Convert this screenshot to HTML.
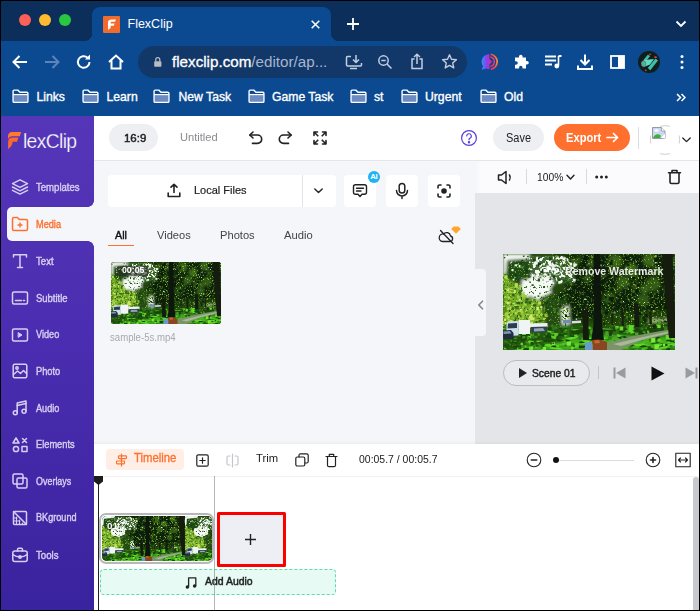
<!DOCTYPE html>
<html>
<head>
<meta charset="utf-8">
<title>FlexClip</title>
<style>
*{box-sizing:border-box;margin:0;padding:0}
html,body{width:700px;height:611px;overflow:hidden;background:#000}
body{font-family:"Liberation Sans",sans-serif;position:relative;color:#222}
.abs{position:absolute}
#win{position:absolute;left:0;top:0;width:700px;height:611px;background:#0b4a90;overflow:hidden}
#chrome{position:absolute;left:2px;top:2px;width:698px;height:113px}
#tabbar{position:absolute;left:-2px;top:-2px;width:700px;height:41px;background:#0b2e5a}
.tl{position:absolute;top:14px;width:12px;height:12px;border-radius:50%}
#tab{position:absolute;left:92px;top:7px;width:239px;height:34px;background:#0b4a90;border-radius:8px 8px 0 0}
#tab:before,#tab:after{content:"";position:absolute;bottom:0;width:8px;height:8px;background:radial-gradient(circle at 0 0,transparent 8px,#0b4a90 8.5px)}
#tab:before{left:-8px}
#tab:after{right:-8px;background:radial-gradient(circle at 100% 0,transparent 8px,#0b4a90 8.5px)}
.wt{color:#fff}
#url{position:absolute;left:136px;top:43.500px;width:328.500px;height:32px;border-radius:16px;background:#113868}
.bm{position:absolute;top:87px;height:16px;color:#fff;font-size:12.200px;line-height:16px;white-space:nowrap;-webkit-text-stroke:0.350px #fff}
#app{position:absolute;left:0;top:0;width:700px;height:611px}
.mi{font-size:10.500px;line-height:14px;font-weight:bold;letter-spacing:-0.300px}
.ic{position:absolute;left:9px;width:18px;height:18px}
.ic svg{width:18px;height:18px;display:block;fill:none;stroke:#d9d2f3;stroke-width:1.6;stroke-linecap:round;stroke-linejoin:round}
.t{position:absolute;white-space:nowrap}
</style>
</head>
<body>
<div id="win">
 <div id="chrome">
  <div id="tabbar">
    <div class="tl" style="left:19px;background:#fe5f57"></div>
    <div class="tl" style="left:39px;background:#febc2e"></div>
    <div class="tl" style="left:59px;background:#28c840"></div>
    <div id="tab">
      <div class="abs" style="left:11px;top:9px;width:17px;height:17px;background:#f26a2c;border-radius:1px">
        <svg width="17" height="17" viewBox="0 0 17 17"><path d="M5 14 L5 6.5 Q5 3.5 8.5 3.5 L13 3.5 L12 5.8 L9 5.8 Q7.6 5.8 7.6 7.2 L7.6 7.6 L11.6 7.6 L10.8 9.8 L7.6 9.8 L7.6 12 Z" fill="#fff"/></svg>
      </div>
      <div class="t wt" style="left:35.500px;top:9px;font-size:12.500px;line-height:16px">FlexClip</div>
      <svg class="abs" style="left:217.500px;top:12px" width="11" height="11" viewBox="0 0 11 11"><path d="M1.700 1.700 L9.300 9.300 M9.300 1.700 L1.700 9.300" stroke="#fff" stroke-width="1.500" fill="none"/></svg>
    </div>
    <svg class="abs" style="left:345.700px;top:17px" width="14" height="14" viewBox="0 0 14 14"><path d="M7 1 V13 M1 7 H13" stroke="#fff" stroke-width="1.8" fill="none"/></svg>
    <svg class="abs" style="left:675px;top:20px" width="12" height="8" viewBox="0 0 12 8"><path d="M1.5 1.5 L6 6 L10.5 1.5" stroke="#fff" stroke-width="1.8" fill="none"/></svg>
  </div>

  <!-- nav row -->
  <svg class="abs" style="left:9px;top:51px" width="18" height="18" viewBox="0 0 18 18"><path d="M16 9 H3 M8.5 3 L2.5 9 L8.5 15" stroke="#fff" stroke-width="2" fill="none"/></svg>
  <svg class="abs" style="left:41px;top:51px" width="18" height="18" viewBox="0 0 18 18"><path d="M2 9 H15 M9.5 3 L15.5 9 L9.5 15" stroke="#5c85bc" stroke-width="2" fill="none"/></svg>
  <svg class="abs" style="left:73px;top:51px" width="18" height="18" viewBox="0 0 18 18"><path d="M14.5 9 A5.8 5.8 0 1 1 12.6 4.7" stroke="#fff" stroke-width="2" fill="none"/><path d="M10 6.5 H15 V1.5 Z" fill="#fff"/></svg>
  <svg class="abs" style="left:105px;top:51px" width="18" height="18" viewBox="0 0 18 18"><path d="M2 9 L9 2.5 L16 9 M4.5 7.5 V15.5 H13.5 V7.5" stroke="#fff" stroke-width="2" fill="none"/></svg>
  <div id="url">
    <svg class="abs" style="left:15px;top:10.500px" width="9.600" height="12" viewBox="0 0 12 15"><path d="M3.5 7 V4.5 A2.5 2.5 0 0 1 8.5 4.5 V7" stroke="#b9bcc3" stroke-width="1.6" fill="none"/><rect x="1.5" y="6.5" width="9" height="7" rx="1" fill="#b9bcc3"/></svg>
    <div class="t" style="left:34px;top:6px;font-size:15.200px;line-height:20px;color:#fff;-webkit-text-stroke:0.300px #fff">flexclip.com<span style="color:#a7b5cf;-webkit-text-stroke:0">/editor/ap...</span></div>
    <!-- install -->
    <svg class="abs" style="left:207px;top:8px" width="18" height="16" viewBox="0 0 18 16"><path d="M6 2.5 H2.5 A1 1 0 0 0 1.5 3.5 V11 A1 1 0 0 0 2.5 12 H15.5 A1 1 0 0 0 16.500 11 V9" stroke="#c3cde0" stroke-width="1.5" fill="none"/><path d="M11 1 V8 M8 5.5 L11 8.5 L14 5.500 M5 14.500 H12" stroke="#c3cde0" stroke-width="1.5" fill="none"/></svg>
    <svg class="abs" style="left:239px;top:8px" width="16" height="16" viewBox="0 0 16 16"><circle cx="6.500" cy="6.500" r="4.700" stroke="#c3cde0" stroke-width="1.500" fill="none"/><path d="M10 10 L14.500 14.500 M4.300 6.500 H8.700" stroke="#c3cde0" stroke-width="1.500" fill="none"/></svg>
    <svg class="abs" style="left:272px;top:7px" width="14" height="17" viewBox="0 0 14 17"><path d="M4.500 6 H2 V15.500 H12 V6 H9.500 M7 11 V1.500 M4 4 L7 1.200 L10 4" stroke="#c3cde0" stroke-width="1.500" fill="none"/></svg>
    <svg class="abs" style="left:303px;top:7px" width="17" height="17" viewBox="0 0 17 17"><path d="M8.500 1.800 L10.500 6.300 L15.400 6.800 L11.700 10.100 L12.800 14.900 L8.500 12.400 L4.200 14.900 L5.300 10.100 L1.600 6.800 L6.500 6.300 Z" stroke="#c3cde0" stroke-width="1.400" fill="none" stroke-linejoin="round"/></svg>
  </div>
  <!-- extension icons -->
  <div class="abs" style="left:478px;top:51px;width:18px;height:18px">
    <svg width="18" height="18" viewBox="0 0 18 18"><defs><linearGradient id="eg1" x1="0" y1="0" x2="1" y2="0"><stop offset="0" stop-color="#3390ff"/><stop offset="0.500" stop-color="#8a40e6"/><stop offset="1" stop-color="#ff1f8e"/></linearGradient><linearGradient id="eg2" x1="0" y1="0" x2="0" y2="1"><stop offset="0" stop-color="#ff4a4a"/><stop offset="0.450" stop-color="#ffa02a"/><stop offset="1" stop-color="#ff2d5f"/></linearGradient></defs><path d="M9.400 1.200 A7.600 7.600 0 0 0 3.100 13.300 L1.700 16.800 L6 15.500 A7.600 7.600 0 0 0 9.400 16.300 L9.400 11.600 L12 8.800 L9.400 6 Z" fill="url(#eg1)"/><path d="M10.400 4 A4.900 4.900 0 0 1 10.400 13.600" stroke="#ff2d6a" stroke-width="1.500" fill="none"/><path d="M10.800 1.300 A7.600 7.600 0 0 1 10.800 16.300" stroke="url(#eg2)" stroke-width="1.600" fill="none"/></svg>
  </div>
  <svg class="abs" style="left:510px;top:51px" width="18" height="18" viewBox="0 0 18 18"><path d="M7 3.500 A1.800 1.800 0 0 1 10.600 3.500 V4.500 H14 V8 H15 A1.800 1.800 0 0 1 15 11.600 H14 V15.500 H10.500 V14.500 A1.700 1.700 0 0 0 7.100 14.500 V15.500 H3 V11.800 H4 A1.800 1.800 0 0 0 4 8.200 H3 V4.500 H7 Z" fill="#fff"/></svg>
  <svg class="abs" style="left:542px;top:52px" width="18" height="16" viewBox="0 0 18 16"><path d="M1 2.500 H12 M1 6.500 H12 M1 10.500 H8" stroke="#fff" stroke-width="1.800" fill="none"/><path d="M14.500 2 V11.500" stroke="#fff" stroke-width="1.600"/><path d="M14.500 2 H17.500" stroke="#fff" stroke-width="2"/><circle cx="12.800" cy="12" r="2.400" fill="#fff"/></svg>
  <svg class="abs" style="left:574px;top:51px" width="18" height="18" viewBox="0 0 18 18"><path d="M9 1.500 V11 M4.500 7 L9 11.500 L13.500 7" stroke="#fff" stroke-width="2" fill="none"/><path d="M2 12.500 V16 H16 V12.500" stroke="#fff" stroke-width="2" fill="none"/></svg>
  <svg class="abs" style="left:608px;top:53px" width="15" height="14" viewBox="0 0 15 14"><rect x="1" y="1" width="13" height="12" stroke="#fff" stroke-width="1.800" fill="none"/><rect x="8" y="1" width="6" height="12" fill="#fff"/></svg>
  <div class="abs" style="left:636px;top:49.200px;width:22px;height:22px;border-radius:50%;background:#0e1f1c;overflow:hidden">
    <svg width="22" height="22" viewBox="0 0 22 22"><path d="M5.500 9 L10 3.500 L12 5.200 L7.500 10.800 Z" fill="#3fbfa8"/><path d="M9.800 17 L17.500 7.500 L20 9.500 L12.300 19.200 Z" fill="#3fbfa8"/><path d="M3 12 L6 9 L16 8 L12 13.500 L6 16 Z" fill="#62d8c2"/><ellipse cx="5.500" cy="12.800" rx="2.200" ry="3" fill="#35c0a5" stroke="#a03848" stroke-width="0.500"/><circle cx="12" cy="3.300" r="0.900" fill="#e8304a"/><ellipse cx="17.500" cy="6.200" rx="1.500" ry="0.900" fill="#e8304a"/><circle cx="7.800" cy="19.300" r="0.900" fill="#e8304a"/></svg>
  </div>
  <svg class="abs" style="left:678px;top:52px" width="4" height="16" viewBox="0 0 4 16"><circle cx="2" cy="2.500" r="1.500" fill="#fff"/><circle cx="2" cy="8" r="1.500" fill="#fff"/><circle cx="2" cy="13.500" r="1.500" fill="#fff"/></svg>

  <!-- bookmarks -->
  <svg class="abs" style="left:9.5px;top:87px" width="17" height="14.500" viewBox="0 0 16 13" preserveAspectRatio="none"><rect x="1.300" y="5" width="13.400" height="6.700" fill="#6c8bc3"/><path d="M1 2 Q1 1 2 1 H5.500 L7.500 3 H14 Q15 3 15 4 V11 Q15 12 14 12 H2 Q1 12 1 11 Z" fill="none" stroke="#fff" stroke-width="1.300" stroke-linejoin="round"/><path d="M1 5 H15" stroke="#fff" stroke-width="1.100"/></svg>
  <div class="bm" style="left:34.5px">Links</div>
  <svg class="abs" style="left:79.5px;top:87px" width="17" height="14.500" viewBox="0 0 16 13" preserveAspectRatio="none"><rect x="1.300" y="5" width="13.400" height="6.700" fill="#6c8bc3"/><path d="M1 2 Q1 1 2 1 H5.500 L7.500 3 H14 Q15 3 15 4 V11 Q15 12 14 12 H2 Q1 12 1 11 Z" fill="none" stroke="#fff" stroke-width="1.300" stroke-linejoin="round"/><path d="M1 5 H15" stroke="#fff" stroke-width="1.100"/></svg>
  <div class="bm" style="left:104.5px">Learn</div>
  <svg class="abs" style="left:151px;top:87px" width="17" height="14.500" viewBox="0 0 16 13" preserveAspectRatio="none"><rect x="1.300" y="5" width="13.400" height="6.700" fill="#6c8bc3"/><path d="M1 2 Q1 1 2 1 H5.500 L7.500 3 H14 Q15 3 15 4 V11 Q15 12 14 12 H2 Q1 12 1 11 Z" fill="none" stroke="#fff" stroke-width="1.300" stroke-linejoin="round"/><path d="M1 5 H15" stroke="#fff" stroke-width="1.100"/></svg>
  <div class="bm" style="left:176.5px">New Task</div>
  <svg class="abs" style="left:245.5px;top:87px" width="17" height="14.500" viewBox="0 0 16 13" preserveAspectRatio="none"><rect x="1.300" y="5" width="13.400" height="6.700" fill="#6c8bc3"/><path d="M1 2 Q1 1 2 1 H5.500 L7.500 3 H14 Q15 3 15 4 V11 Q15 12 14 12 H2 Q1 12 1 11 Z" fill="none" stroke="#fff" stroke-width="1.300" stroke-linejoin="round"/><path d="M1 5 H15" stroke="#fff" stroke-width="1.100"/></svg>
  <div class="bm" style="left:270px">Game Task</div>
  <svg class="abs" style="left:347.5px;top:87px" width="17" height="14.500" viewBox="0 0 16 13" preserveAspectRatio="none"><rect x="1.300" y="5" width="13.400" height="6.700" fill="#6c8bc3"/><path d="M1 2 Q1 1 2 1 H5.500 L7.500 3 H14 Q15 3 15 4 V11 Q15 12 14 12 H2 Q1 12 1 11 Z" fill="none" stroke="#fff" stroke-width="1.300" stroke-linejoin="round"/><path d="M1 5 H15" stroke="#fff" stroke-width="1.100"/></svg>
  <div class="bm" style="left:372px">st</div>
  <svg class="abs" style="left:399px;top:87px" width="17" height="14.500" viewBox="0 0 16 13" preserveAspectRatio="none"><rect x="1.300" y="5" width="13.400" height="6.700" fill="#6c8bc3"/><path d="M1 2 Q1 1 2 1 H5.500 L7.500 3 H14 Q15 3 15 4 V11 Q15 12 14 12 H2 Q1 12 1 11 Z" fill="none" stroke="#fff" stroke-width="1.300" stroke-linejoin="round"/><path d="M1 5 H15" stroke="#fff" stroke-width="1.100"/></svg>
  <div class="bm" style="left:423px">Urgent</div>
  <svg class="abs" style="left:477.5px;top:87px" width="17" height="14.500" viewBox="0 0 16 13" preserveAspectRatio="none"><rect x="1.300" y="5" width="13.400" height="6.700" fill="#6c8bc3"/><path d="M1 2 Q1 1 2 1 H5.500 L7.500 3 H14 Q15 3 15 4 V11 Q15 12 14 12 H2 Q1 12 1 11 Z" fill="none" stroke="#fff" stroke-width="1.300" stroke-linejoin="round"/><path d="M1 5 H15" stroke="#fff" stroke-width="1.100"/></svg>
  <div class="bm" style="left:502px">Old</div>
  <svg class="abs" style="left:674px;top:91px" width="10" height="9" viewBox="0 0 10 9"><path d="M1 1 L4.500 4.500 L1 8 M5.500 1 L9 4.500 L5.500 8" stroke="#fff" stroke-width="1.500" fill="none"/></svg>

 </div>
  <div id="app">
<!--APPSTART-->
<svg width="0" height="0" style="position:absolute">
<defs>
<filter id="n1" x="0" y="0" width="100%" height="100%" filterUnits="objectBoundingBox" color-interpolation-filters="sRGB"><feTurbulence type="fractalNoise" baseFrequency="0.5" numOctaves="2" seed="3" result="n"/><feColorMatrix in="n" type="matrix" values="0 0 0 0 0.204 0 0 0 0 0.361 0 0 0 0 0.086 10 0 0 0 -5.5" result="s"/><feComposite in="s" in2="SourceGraphic" operator="in"/></filter>
<filter id="n2" x="0" y="0" width="100%" height="100%" filterUnits="objectBoundingBox" color-interpolation-filters="sRGB"><feTurbulence type="fractalNoise" baseFrequency="0.6" numOctaves="2" seed="8" result="n"/><feColorMatrix in="n" type="matrix" values="0 0 0 0 0.525 0 0 0 0 0.690 0 0 0 0 0.157 12 0 0 0 -7.7" result="s"/><feComposite in="s" in2="SourceGraphic" operator="in"/></filter>
<filter id="n3" x="0" y="0" width="100%" height="100%" filterUnits="objectBoundingBox" color-interpolation-filters="sRGB"><feTurbulence type="fractalNoise" baseFrequency="0.7" numOctaves="2" seed="12" result="n"/><feColorMatrix in="n" type="matrix" values="0 0 0 0 0.925 0 0 0 0 0.965 0 0 0 0 0.925 14 0 0 0 -10.6" result="s"/><feComposite in="s" in2="SourceGraphic" operator="in"/></filter>
<filter id="n4" x="0" y="0" width="100%" height="100%" filterUnits="objectBoundingBox" color-interpolation-filters="sRGB"><feTurbulence type="fractalNoise" baseFrequency="0.45" numOctaves="2" seed="5" result="n"/><feColorMatrix in="n" type="matrix" values="0 0 0 0 0.659 0 0 0 0 0.831 0 0 0 0 0.251 10 0 0 0 -5.6" result="s"/><feComposite in="s" in2="SourceGraphic" operator="in"/></filter>
<filter id="n5" x="0" y="0" width="100%" height="100%" filterUnits="objectBoundingBox" color-interpolation-filters="sRGB"><feTurbulence type="fractalNoise" baseFrequency="0.5" numOctaves="2" seed="21" result="n"/><feColorMatrix in="n" type="matrix" values="0 0 0 0 0.173 0 0 0 0 0.376 0 0 0 0 0.078 10 0 0 0 -5.9" result="s"/><feComposite in="s" in2="SourceGraphic" operator="in"/></filter>
<filter id="n6" x="0" y="0" width="100%" height="100%" filterUnits="objectBoundingBox" color-interpolation-filters="sRGB"><feTurbulence type="fractalNoise" baseFrequency="0.09 0.3" numOctaves="1" seed="4" result="n"/><feColorMatrix in="n" type="matrix" values="0 0 0 0 0.376 0 0 0 0 0.847 0 0 0 0 0.157 9 0 0 0 -4.9" result="s"/><feComposite in="s" in2="SourceGraphic" operator="in"/></filter>
<filter id="n7" x="0" y="0" width="100%" height="100%" filterUnits="objectBoundingBox" color-interpolation-filters="sRGB"><feTurbulence type="fractalNoise" baseFrequency="0.12 0.35" numOctaves="1" seed="14" result="n"/><feColorMatrix in="n" type="matrix" values="0 0 0 0 0.078 0 0 0 0 0.275 0 0 0 0 0.047 9 0 0 0 -4.9" result="s"/><feComposite in="s" in2="SourceGraphic" operator="in"/></filter>
<filter id="n8" x="0" y="0" width="100%" height="100%" filterUnits="objectBoundingBox" color-interpolation-filters="sRGB"><feTurbulence type="fractalNoise" baseFrequency="0.3" numOctaves="2" seed="31" result="n"/><feColorMatrix in="n" type="matrix" values="0 0 0 0 0.957 0 0 0 0 0.976 0 0 0 0 0.949 10 0 0 0 -4.9" result="s"/><feComposite in="s" in2="SourceGraphic" operator="in"/></filter>
<filter id="n9" x="0" y="0" width="100%" height="100%" filterUnits="objectBoundingBox" color-interpolation-filters="sRGB"><feTurbulence type="fractalNoise" baseFrequency="0.4" numOctaves="2" seed="17" result="n"/><feColorMatrix in="n" type="matrix" values="0 0 0 0 0.141 0 0 0 0 0.314 0 0 0 0 0.094 12 0 0 0 -7.6" result="s"/><feComposite in="s" in2="SourceGraphic" operator="in"/></filter>
<filter id="b2" x="-10%" y="-10%" width="120%" height="120%"><feGaussianBlur stdDeviation="1.600"/></filter>
<filter id="b1" x="-5%" y="-5%" width="110%" height="110%"><feGaussianBlur stdDeviation="0.550"/></filter>
<g id="forest">
<rect width="172" height="96" fill="#245214"/>
<g filter="url(#b2)"><path d="M0 0 L172 0 L172 96 L0 96Z" fill="#24460f"/><path d="M48 0 L172 0 L172 64 L60 66 L52 48 L62 30 L62 14Z" fill="#0f210a"/><path d="M26 3 L60 2 L74 10 L70 28 L50 30 L30 24 L26 14Z" fill="#3f6a30"/><path d="M0 18 L6 26 L18 32 L24 44 L40 46 L44 60 L42 70 L0 72Z" fill="#6ea827"/><path d="M0 0 L27 0 L25 5 L10 6 L5 9 L4 18 L0 22Z" fill="#f4f8f4"/><path d="M19 26 L26 21 L34 23 L45 21 L51 29 L47 35 L50 41 L40 43 L36 46 L27 42 L22 44 L18 35Z" fill="#f6faf4"/><path d="M4 6 L24 5 L28 14 L26 25 L12 27 L3 20Z" fill="#1f4a16"/><path d="M37 44 L50 38 L64 42 L66 72 L44 74 L40 60Z" fill="#234a12"/><path d="M100 58 L172 56 L172 74 L100 74Z" fill="#1f4010"/><path d="M0 74 L172 70 L172 96 L0 96Z" fill="#2f8214"/><path d="M66 74 L172 70 L172 80 L120 86 L66 84Z" fill="#1c430d"/><path d="M24 92 L60 86 L100 80 L172 84 L172 96 L10 96Z" fill="#44b01c"/><path d="M0 80 L44 77 L58 74 L60 88 L24 92 L0 96Z" fill="#22520f"/><path d="M58 54 L66 52 L67 70 L59 71Z" fill="#e4f0e4"/><path d="M146 65.5 L166 65 L166 68 L146 68.5Z" fill="#b4cc90"/><circle cx="88.9" cy="9.4" r="3.6" fill="#2f5818"/><circle cx="148.6" cy="5.8" r="3.5" fill="#10260a"/><circle cx="75.8" cy="5.3" r="3.0" fill="#274c14"/><circle cx="149.2" cy="7.7" r="2.6" fill="#10260a"/><circle cx="163.7" cy="35.8" r="3.0" fill="#274c14"/><circle cx="55.6" cy="53.2" r="2.7" fill="#274c14"/><circle cx="114.9" cy="35.4" r="3.4" fill="#274c14"/><circle cx="62.4" cy="35.4" r="2.5" fill="#2f5818"/><circle cx="115.7" cy="3.9" r="2.1" fill="#274c14"/><circle cx="109.6" cy="33.0" r="3.9" fill="#0f2208"/><circle cx="120.3" cy="28.1" r="2.7" fill="#274c14"/><circle cx="133.9" cy="15.1" r="3.4" fill="#10260a"/><circle cx="109.4" cy="21.3" r="3.1" fill="#10260a"/><circle cx="167.6" cy="7.3" r="3.0" fill="#38641a"/><circle cx="68.2" cy="30.3" r="2.1" fill="#2f5818"/><circle cx="141.7" cy="35.5" r="4.2" fill="#38641a"/><circle cx="90.8" cy="21.7" r="3.2" fill="#0f2208"/><circle cx="58.3" cy="5.8" r="2.7" fill="#2f5818"/><circle cx="57.3" cy="43.5" r="3.6" fill="#0f2208"/><circle cx="84.2" cy="23.9" r="3.7" fill="#2f5818"/><circle cx="162.9" cy="22.0" r="3.5" fill="#0f2208"/><circle cx="57.1" cy="47.6" r="2.3" fill="#274c14"/><circle cx="97.7" cy="56.8" r="3.2" fill="#274c14"/><circle cx="103.9" cy="34.1" r="4.2" fill="#0f2208"/><circle cx="153.7" cy="17.3" r="3.0" fill="#38641a"/><circle cx="131.9" cy="23.6" r="2.6" fill="#2f5818"/><circle cx="71.1" cy="14.4" r="2.6" fill="#0f2208"/><circle cx="149.7" cy="11.3" r="2.7" fill="#274c14"/><circle cx="100.3" cy="22.9" r="3.4" fill="#274c14"/><circle cx="132.9" cy="32.0" r="3.5" fill="#2f5818"/><circle cx="104.8" cy="54.0" r="4.4" fill="#10260a"/><circle cx="97.1" cy="24.7" r="2.3" fill="#0f2208"/><circle cx="57.5" cy="4.2" r="2.5" fill="#274c14"/><circle cx="63.2" cy="37.2" r="2.3" fill="#10260a"/><circle cx="112" cy="8" r="7" fill="#3a661a"/><circle cx="128" cy="16" r="6" fill="#42721e"/><circle cx="146" cy="6" r="6" fill="#3a661a"/><circle cx="120" cy="28" r="6" fill="#35601a"/><circle cx="70" cy="10" r="5" fill="#35601a"/><circle cx="150" cy="30" r="7" fill="#325a18"/><circle cx="106" cy="44" r="6" fill="#2c5416"/><circle cx="140" cy="46" r="6" fill="#2f5818"/></g>
<path d="M48 0 L172 0 L172 64 L60 66 L52 48 L62 30 L62 14Z" fill="#000" filter="url(#n1)"/><path d="M48 0 L172 0 L172 64 L60 66 L52 48 L62 30 L62 14Z" fill="#000" filter="url(#n2)"/><path d="M48 0 L172 0 L172 64 L60 66 L52 48 L62 30 L62 14Z" fill="#000" filter="url(#n3)"/>
<path d="M37 44 L50 38 L64 42 L66 72 L44 74 L40 60Z" fill="#000" filter="url(#n1)"/><path d="M37 44 L50 38 L64 42 L66 72 L44 74 L40 60Z" fill="#000" filter="url(#n2)"/>
<path d="M100 58 L172 56 L172 74 L100 74Z" fill="#000" filter="url(#n1)"/><path d="M100 58 L172 56 L172 74 L100 74Z" fill="#000" filter="url(#n2)"/>
<path d="M0 18 L6 26 L18 32 L24 44 L40 46 L44 60 L42 70 L0 72Z" fill="#000" filter="url(#n4)"/><path d="M0 18 L6 26 L18 32 L24 44 L40 46 L44 60 L42 70 L0 72Z" fill="#000" filter="url(#n5)"/>
<path d="M0 74 L172 70 L172 96 L0 96Z" fill="#000" filter="url(#n6)"/><path d="M0 74 L172 70 L172 96 L0 96Z" fill="#000" filter="url(#n7)"/>
<path d="M0 80 L44 77 L58 74 L60 88 L24 92 L0 96Z" fill="#000" filter="url(#n5)"/>
<path d="M26 3 L60 2 L74 10 L70 28 L50 30 L30 24 L26 14Z" fill="#000" filter="url(#n8)"/><path d="M19 26 L26 21 L34 23 L45 21 L51 29 L47 35 L50 41 L40 43 L36 46 L27 42 L22 44 L18 35Z" fill="#000" filter="url(#n9)"/><path d="M4 6 L24 5 L28 14 L26 25 L12 27 L3 20Z" fill="#000" filter="url(#n2)"/>
<g filter="url(#b1)">
<path fill="#0a1a06" d="M66.8 6.7h2.4v1.7h-2.4zM66.2 35.8h1.6v1.6h-1.6zM134.3 17.2h2.4v1.9h-2.4zM114.0 51.4h2.3v1.9h-2.3zM166.4 24.1h2.1v1.7h-2.1zM89.9 31.9h4.0v4.2h-4.0zM107.5 43.1h3.5v2.6h-3.5zM160.8 51.6h3.4v3.3h-3.4zM105.4 49.1h1.7v1.4h-1.7zM129.5 23.1h2.9v2.2h-2.9zM147.1 47.9h1.8v2.0h-1.8zM150.6 58.0h1.8v1.4h-1.8zM156.2 51.2h3.0v3.5h-3.0zM132.6 35.0h2.7v3.2h-2.7zM78.8 18.3h3.4v3.4h-3.4zM142.2 60.2h2.6v2.8h-2.6zM133.9 29.9h2.8v2.8h-2.8zM134.7 57.9h3.9v3.3h-3.9zM152.2 9.1h1.8v1.7h-1.8zM131.2 28.3h2.0v1.8h-2.0zM159.2 10.2h3.3v3.6h-3.3zM79.4 9.1h2.7v3.1h-2.7zM97.4 32.2h4.0v4.8h-4.0zM102.6 1.2h2.3v2.5h-2.3zM62.0 60.6h2.1v2.5h-2.1zM80.9 2.6h3.4v3.0h-3.4z"/>
<path fill="#0c1e08" d="M124.1 9.8h2.1v1.9h-2.1zM106.8 7.6h2.7v3.5h-2.7zM108.0 5.7h1.8v1.6h-1.8zM107.3 45.7h2.8v2.3h-2.8zM148.0 54.0h3.3v2.8h-3.3zM92.1 1.9h1.6v1.4h-1.6zM72.0 39.9h2.4v2.8h-2.4zM101.8 42.0h1.7v2.2h-1.7zM105.7 43.3h3.0v3.2h-3.0zM101.8 57.5h3.6v2.9h-3.6zM74.4 33.1h3.4v3.1h-3.4zM151.4 4.0h3.3v4.1h-3.3zM69.4 31.3h3.3v3.4h-3.3zM98.1 27.8h2.4v1.8h-2.4z"/>
<path fill="#8ab436" d="M149.7 56.1h1.9v2.5h-1.9zM163.6 41.5h1.7v1.4h-1.7zM106.9 61.7h1.1v1.4h-1.1zM90.5 54.9h2.0v2.2h-2.0zM151.8 0.9h1.9v2.3h-1.9zM59.3 53.9h1.2v1.3h-1.2z"/>
<path fill="#4f7a1c" d="M66.5 60.7h1.8v2.0h-1.8zM106.9 33.2h1.3v1.3h-1.3zM170.1 9.9h2.0v2.2h-2.0zM148.7 9.2h1.7v1.7h-1.7zM127.7 5.6h1.1v1.1h-1.1z"/>
<path fill="#3f6a18" d="M82.6 52.8h1.3v1.6h-1.3zM110.0 11.7h1.5v1.1h-1.5zM129.4 36.0h2.2v2.9h-2.2z"/>
<path fill="#6a9626" d="M164.4 41.9h2.1v1.6h-2.1zM77.6 7.2h1.2v0.9h-1.2zM168.4 39.5h2.0v1.4h-2.0zM88.1 2.3h2.2v1.9h-2.2z"/>
<path fill="#5a8820" d="M56.3 56.9h1.6v1.5h-1.6zM52.6 1.2h1.7v2.2h-1.7zM67.5 29.4h1.4v1.7h-1.4zM94.7 29.8h1.1v0.8h-1.1z"/>
<path fill="#355e16" d="M99.8 60.4h1.9v1.4h-1.9zM68.2 5.6h2.2v2.7h-2.2zM76.9 38.6h1.7v2.0h-1.7zM158.7 51.7h1.8v2.1h-1.8zM150.3 47.2h1.7v1.6h-1.7zM150.5 38.5h2.2v2.5h-2.2zM132.4 32.3h1.0v1.2h-1.0zM163.6 59.3h1.1v1.1h-1.1z"/>
<path fill="#a8d8e8" d="M139.4 16.6h0.9v0.7h-0.9zM57.5 60.1h1.0v0.7h-1.0zM127.7 5.1h0.9v0.8h-0.9zM135.9 18.8h1.2v1.4h-1.2zM65.6 34.6h1.6v1.2h-1.6zM152.0 7.9h1.5v1.7h-1.5zM83.9 24.6h1.1v1.4h-1.1zM141.7 56.4h1.0v0.7h-1.0z"/>
<path fill="#e8f4f0" d="M141.8 15.2h1.3v1.3h-1.3zM133.9 41.0h0.9v0.9h-0.9zM81.3 44.4h1.4v1.5h-1.4zM72.7 64.6h1.5v1.1h-1.5zM111.1 58.5h1.4v1.1h-1.4zM96.9 10.5h1.6v1.7h-1.6zM85.4 9.3h1.1v1.0h-1.1z"/>
<path fill="#cfe8c0" d="M96.0 60.5h1.5v1.2h-1.5z"/>
<path fill="#3b7422" d="M26.2 27.6h1.8v1.4h-1.8zM43.9 31.7h1.0v1.2h-1.0zM36.1 39.0h1.1v1.2h-1.1zM42.4 37.3h1.6v1.4h-1.6zM34.5 41.3h1.8v1.8h-1.8z"/>
<path fill="#5a9a30" d="M38.3 24.5h2.3v2.3h-2.3zM22.2 32.8h1.5v1.3h-1.5z"/>
<path fill="#2a5a1a" d="M36.4 30.9h1.3v1.0h-1.3zM22.6 25.8h1.1v1.0h-1.1zM28.5 30.2h2.2v1.8h-2.2zM24.1 1.9h1.5v1.2h-1.5zM22.7 4.5h1.2v1.4h-1.2zM0.8 3.0h1.6v1.2h-1.6zM19.9 1.4h1.6v1.5h-1.6z"/>
<path fill="#1c4412" d="M62.0 13.6h1.9v1.9h-1.9zM69.0 15.3h2.3v1.6h-2.3zM49.7 21.5h2.6v2.4h-2.6zM49.8 7.6h2.7v2.2h-2.7zM36.6 23.3h1.6v2.1h-1.6zM47.2 5.1h1.2v0.9h-1.2zM37.2 15.3h3.1v4.0h-3.1zM63.9 27.6h2.8v2.2h-2.8zM30.0 4.7h2.1v2.4h-2.1zM56.7 4.6h1.4v1.5h-1.4zM46.1 3.4h2.6v3.2h-2.6zM46.3 25.0h1.9v2.3h-1.9z"/>
<path fill="#e4f0e0" d="M39.0 23.1h2.1v2.2h-2.1zM60.1 7.2h2.0v2.2h-2.0zM48.4 10.7h2.6v3.1h-2.6zM59.9 7.5h2.2v2.1h-2.2zM70.2 9.2h2.6v3.3h-2.6zM40.1 9.8h1.6v1.4h-1.6zM57.9 2.2h2.4v2.7h-2.4zM36.4 12.3h1.3v1.1h-1.3zM69.9 24.8h2.8v2.6h-2.8z"/>
<path fill="#ffffff" d="M32.0 16.1h2.4v2.9h-2.4zM51.3 15.1h2.0v2.3h-2.0zM40.5 14.9h3.1v3.4h-3.1zM46.2 9.2h2.5v3.1h-2.5zM35.5 24.3h2.6v2.6h-2.6zM63.5 4.2h1.4v1.7h-1.4zM45.6 20.2h2.1v2.1h-2.1zM34.3 5.7h2.0v2.5h-2.0zM37.1 14.6h1.8v2.2h-1.8zM49.2 13.4h2.8v3.0h-2.8zM46.0 26.2h3.2v2.9h-3.2zM44.8 13.3h3.1v3.0h-3.1z"/>
<path fill="#24501a" d="M44.5 20.1h2.0v1.7h-2.0zM59.6 25.7h3.0v2.2h-3.0zM43.5 27.1h1.1v1.0h-1.1zM56.0 13.3h1.8v1.8h-1.8zM60.4 10.9h1.6v1.1h-1.6zM54.6 24.6h3.1v2.3h-3.1zM34.8 24.5h2.6v3.1h-2.6zM33.3 8.6h2.9v2.8h-2.9zM61.9 25.7h2.5v1.9h-2.5zM43.9 26.3h2.0v1.7h-2.0zM63.1 5.6h1.1v0.9h-1.1z"/>
<path fill="#f4f8f2" d="M33.4 16.6h2.5v3.2h-2.5zM57.0 10.5h1.3v1.1h-1.3zM48.8 8.6h1.5v2.0h-1.5zM57.2 3.5h1.4v1.8h-1.4zM55.3 27.1h2.1v2.6h-2.1zM44.9 8.0h3.1v2.5h-3.1zM70.7 11.2h1.4v1.8h-1.4zM43.1 25.0h2.8v2.7h-2.8zM43.4 11.4h3.1v2.2h-3.1zM37.1 24.6h2.4v3.2h-2.4zM31.7 7.3h3.1v3.3h-3.1z"/>
<path fill="#143410" d="M47.0 23.4h1.2v1.1h-1.2zM35.2 9.3h2.7v1.9h-2.7zM35.6 8.9h1.5v1.2h-1.5zM35.0 3.8h1.6v1.3h-1.6zM34.9 10.7h1.4v1.7h-1.4zM55.9 66.2h1.1v0.8h-1.1zM43.0 47.5h2.0v1.8h-2.0zM63.0 44.1h2.6v2.0h-2.6zM55.5 51.0h2.7v2.8h-2.7zM44.7 73.7h2.2v2.0h-2.2zM49.1 51.1h1.1v1.1h-1.1zM60.6 44.3h1.6v1.4h-1.6z"/>
<path fill="#1a4210" d="M55.0 51.4h2.0v1.6h-2.0zM45.7 68.1h1.1v1.4h-1.1zM61.3 42.2h2.2v2.3h-2.2zM55.8 49.1h1.5v1.4h-1.5zM60.5 52.4h1.1v1.0h-1.1zM38.9 50.6h2.5v2.0h-2.5zM42.8 52.5h2.3v2.0h-2.3zM44.3 57.3h2.7v3.1h-2.7zM49.8 44.4h2.5v1.8h-2.5zM46.0 72.8h2.7v3.4h-2.7zM47.3 41.8h1.7v1.4h-1.7zM57.5 54.2h1.1v0.9h-1.1zM48.7 47.5h1.0v1.1h-1.0zM44.6 61.2h1.2v1.5h-1.2zM57.6 47.6h2.1v2.0h-2.1z"/>
<path fill="#3b7a20" d="M41.7 44.2h1.1v1.1h-1.1zM48.2 70.6h2.2v2.7h-2.2zM55.6 68.8h2.2v2.4h-2.2zM61.0 44.6h1.4v1.3h-1.4zM48.1 42.4h1.5v1.7h-1.5zM50.5 54.1h2.2v2.7h-2.2zM39.7 53.9h2.0v1.5h-2.0zM51.3 72.4h2.8v2.3h-2.8zM54.1 45.4h2.2v2.2h-2.2zM42.4 43.7h2.8v2.2h-2.8z"/>
<path fill="#4f962a" d="M50.0 53.8h1.0v1.1h-1.0zM59.6 56.4h1.1v1.1h-1.1zM63.2 54.4h1.5v1.9h-1.5zM58.3 64.9h1.4v1.3h-1.4zM54.2 58.8h2.2v2.2h-2.2zM44.2 70.5h1.1v1.1h-1.1zM41.1 45.2h2.2v2.2h-2.2zM50.9 57.4h1.8v1.7h-1.8z"/>
<path fill="#4b8a2a" d="M3.9 0.6h1.1v1.4h-1.1z"/>
<path fill="#163a10" d="M25.0 21.6h2.1v1.9h-2.1zM5.2 21.5h1.9v1.9h-1.9zM18.5 5.7h1.6v1.6h-1.6zM11.7 20.5h1.8v1.5h-1.8zM26.9 16.3h1.9v1.5h-1.9zM22.2 15.8h2.5v2.6h-2.5zM17.5 7.8h1.7v2.1h-1.7z"/>
<path fill="#e8f4e8" d="M8.1 7.5h1.1v1.3h-1.1zM18.7 12.8h1.6v1.5h-1.6zM9.6 24.8h1.8v1.6h-1.8zM8.8 15.1h1.8v2.1h-1.8zM15.7 10.9h2.1v2.5h-2.1zM6.9 8.4h1.4v1.2h-1.4zM11.7 10.2h2.4v2.1h-2.4z"/>
<path fill="#2f6a1c" d="M5.4 21.7h1.3v1.2h-1.3zM9.5 12.7h2.4v1.7h-2.4zM25.8 21.9h1.9v1.9h-1.9zM17.4 11.3h1.7v1.7h-1.7zM15.3 22.5h1.3v1.3h-1.3zM19.2 12.7h1.5v1.2h-1.5zM19.6 21.3h1.3v1.2h-1.3zM19.4 9.3h1.2v1.0h-1.2z"/>
<path fill="#3f7418" d="M8.6 52.5h1.4v1.2h-1.4zM8.1 53.3h2.9v2.7h-2.9zM23.7 64.6h1.2v1.5h-1.2zM30.6 44.9h1.9v1.8h-1.9zM21.9 46.2h3.0v3.5h-3.0zM25.3 67.6h2.2v1.5h-2.2zM34.3 64.3h1.7v2.2h-1.7zM1.2 19.9h2.0v2.3h-2.0zM41.7 67.1h1.3v1.4h-1.3zM28.2 69.6h2.7v2.5h-2.7zM16.4 39.1h2.0v1.9h-2.0zM16.4 58.5h2.9v3.7h-2.9zM16.1 35.9h2.8v2.3h-2.8zM11.9 63.3h1.9v1.6h-1.9zM2.5 66.3h2.7v2.2h-2.7zM36.6 46.4h1.6v1.5h-1.6zM12.4 52.5h3.3v2.5h-3.3zM36.8 52.4h2.2v1.9h-2.2zM40.7 51.5h1.8v1.8h-1.8z"/>
<path fill="#94c034" d="M9.8 71.0h1.9v1.3h-1.9zM18.5 60.2h2.8v3.0h-2.8zM17.3 59.2h1.5v1.9h-1.5zM20.6 48.4h1.7v2.2h-1.7zM29.3 62.9h2.9v2.8h-2.9zM35.4 61.1h2.0v2.2h-2.0zM21.1 41.1h2.6v2.9h-2.6zM25.6 53.5h1.7v1.2h-1.7zM19.1 40.8h2.4v2.9h-2.4zM22.3 70.6h2.6v3.1h-2.6zM31.8 65.8h2.4v1.8h-2.4zM1.6 59.8h3.2v3.5h-3.2zM32.9 55.5h1.5v1.8h-1.5zM27.7 56.3h2.2v2.8h-2.2zM19.3 54.6h1.5v1.8h-1.5zM27.8 60.5h1.5v1.6h-1.5zM41.6 59.4h3.0v3.8h-3.0zM10.3 56.9h1.6v2.0h-1.6zM2.6 47.9h1.3v1.6h-1.3zM13.1 49.9h2.9v2.2h-2.9zM12.7 66.4h1.3v1.5h-1.3zM18.0 57.0h1.3v1.6h-1.3zM8.2 62.9h2.0v1.6h-2.0zM3.1 37.3h1.7v2.1h-1.7zM34.3 64.9h2.5v3.1h-2.5zM26.0 68.3h2.2v2.2h-2.2z"/>
<path fill="#2f6014" d="M32.6 67.0h2.1v2.2h-2.1zM25.3 47.2h2.8v2.8h-2.8zM39.9 60.3h1.5v1.8h-1.5zM9.2 39.7h2.4v2.5h-2.4zM18.4 69.9h1.4v1.5h-1.4zM22.5 44.2h3.2v2.3h-3.2zM22.0 47.4h2.0v1.6h-2.0zM30.6 50.2h2.7v2.2h-2.7zM36.7 50.9h1.9v2.4h-1.9zM4.4 35.2h1.2v1.0h-1.2zM13.7 48.0h3.3v2.3h-3.3zM26.0 64.5h1.5v1.6h-1.5zM17.5 69.2h1.2v1.3h-1.2zM17.6 48.3h1.9v1.5h-1.9zM35.6 65.8h3.1v2.3h-3.1z"/>
<path fill="#cfe870" d="M28.5 63.7h2.7v2.9h-2.7zM0.9 64.4h2.3v2.6h-2.3zM33.4 53.1h2.9v2.9h-2.9zM26.8 60.2h2.7v3.3h-2.7zM15.6 44.7h1.9v2.5h-1.9zM27.9 51.8h1.6v1.7h-1.6zM3.5 34.8h2.8v2.2h-2.8zM16.6 55.0h2.5v3.1h-2.5zM25.8 62.1h3.2v2.3h-3.2zM6.2 66.1h3.4v2.7h-3.4zM3.7 47.9h3.0v2.4h-3.0zM12.3 50.8h1.4v1.2h-1.4zM1.6 68.1h1.7v2.1h-1.7zM37.1 51.9h2.2v2.0h-2.2zM9.6 48.9h1.5v1.2h-1.5zM26.4 62.8h3.2v3.6h-3.2zM12.1 29.1h2.5v2.9h-2.5zM10.6 36.1h2.2v2.8h-2.2zM27.3 67.6h2.6v2.8h-2.6z"/>
<path fill="#a4d040" d="M28.2 49.5h1.7v1.4h-1.7zM16.6 31.7h2.1v1.7h-2.1zM3.5 63.3h2.7v2.1h-2.7zM11.6 30.6h1.5v1.5h-1.5zM2.0 57.8h3.4v4.0h-3.4zM8.5 56.5h1.5v1.9h-1.5zM13.6 56.3h3.1v2.5h-3.1zM14.0 41.3h2.6v3.3h-2.6zM17.4 56.3h3.2v3.4h-3.2zM34.6 56.3h2.6v3.4h-2.6zM4.5 65.0h2.8v2.0h-2.8zM20.5 49.6h2.9v2.2h-2.9zM18.5 63.3h2.4v2.2h-2.4zM18.6 52.2h2.0v2.0h-2.0zM18.5 39.4h3.4v3.3h-3.4z"/>
<path fill="#5a8c1e" d="M11.1 29.8h2.8v3.5h-2.8zM15.1 58.1h2.2v2.9h-2.2zM7.2 68.2h1.4v1.6h-1.4zM6.3 30.6h2.9v2.6h-2.9zM21.3 66.9h2.7v2.3h-2.7zM33.9 47.6h1.4v1.4h-1.4zM0.4 54.1h3.4v4.1h-3.4zM0.8 56.8h1.7v2.0h-1.7zM36.6 50.5h1.9v1.8h-1.9zM19.9 55.2h1.9v1.6h-1.9zM40.6 56.1h1.4v1.2h-1.4zM33.2 70.4h2.2v1.8h-2.2z"/>
<path fill="#b8dc54" d="M3.3 67.4h2.6v2.9h-2.6zM11.7 30.1h2.8v3.6h-2.8zM6.7 34.4h2.0v1.5h-2.0zM4.2 53.6h2.0v2.3h-2.0zM1.4 21.3h3.1v3.5h-3.1zM12.0 58.8h1.9v1.7h-1.9zM35.1 47.6h2.9v2.9h-2.9zM3.9 61.6h2.9v2.4h-2.9zM4.8 42.6h2.3v1.8h-2.3zM6.4 52.5h2.2v2.2h-2.2zM8.5 34.6h1.2v1.4h-1.2zM25.3 64.3h2.0v2.5h-2.0zM38.4 69.5h2.3v2.3h-2.3zM5.0 36.8h1.6v1.2h-1.6z"/>
<path fill="#22541a" d="M165.9 66.4h1.5v1.8h-1.5zM121.3 69.9h1.3v1.0h-1.3zM171.2 68.2h2.9v2.7h-2.9zM135.8 73.3h2.1v2.0h-2.1zM153.7 73.8h1.8v1.6h-1.8zM157.8 63.8h1.8v1.5h-1.8zM170.0 72.0h2.9v2.1h-2.9zM137.3 65.3h2.4v2.2h-2.4zM163.3 73.4h2.0v1.9h-2.0zM149.8 69.4h1.2v1.1h-1.2zM170.4 70.9h2.0v1.6h-2.0z"/>
<path fill="#4c962a" d="M160.5 67.0h2.1v2.3h-2.1zM169.8 63.1h2.8v2.3h-2.8zM123.3 61.9h1.5v1.9h-1.5zM127.9 63.9h2.5v1.9h-2.5zM153.2 69.4h2.5v2.5h-2.5zM123.3 71.2h2.7v3.4h-2.7zM137.8 57.8h1.7v1.6h-1.7zM145.4 65.4h2.6v2.2h-2.6zM155.4 66.2h2.7v3.4h-2.7zM146.8 68.3h2.2v1.7h-2.2zM142.0 73.3h1.9v2.0h-1.9z"/>
<path fill="#112c0a" d="M139.5 62.6h2.8v2.5h-2.8zM133.8 61.6h1.5v1.2h-1.5zM162.8 66.9h1.8v1.7h-1.8zM120.7 62.3h1.7v1.7h-1.7zM140.7 65.0h2.8v3.3h-2.8zM149.7 70.8h3.0v3.7h-3.0zM100.2 68.8h2.1v2.6h-2.1zM160.6 66.6h2.3v1.9h-2.3zM125.1 64.1h1.8v1.3h-1.8zM164.7 70.7h1.6v1.7h-1.6z"/>
<path fill="#163a0e" d="M110.1 59.6h2.2v1.9h-2.2zM129.7 57.9h1.8v1.9h-1.8zM102.9 68.2h1.9v1.3h-1.9zM140.7 57.9h2.1v2.3h-2.1zM141.4 63.4h1.2v1.0h-1.2zM168.2 64.8h1.9v1.9h-1.9zM125.5 59.0h1.5v1.2h-1.5zM116.0 58.9h2.2v1.7h-2.2z"/>
<path fill="#5ccc24" d="M168.5 71.8h3.2v3.5h-3.2zM71.1 80.4h3.3v2.3h-3.3zM21.2 91.5h2.4v2.0h-2.4zM93.7 90.5h2.9v2.8h-2.9zM27.4 79.2h3.3v3.1h-3.3zM51.1 82.4h2.0v2.4h-2.0zM11.7 93.8h3.5v4.1h-3.5zM48.6 80.5h3.8v4.4h-3.8zM60.6 86.3h2.0v1.5h-2.0zM127.0 84.4h3.1v3.9h-3.1zM71.8 89.3h4.0v4.3h-4.0zM87.5 87.6h2.0v2.2h-2.0zM61.5 80.7h2.0v1.8h-2.0zM62.0 75.4h1.7v1.4h-1.7zM144.4 77.7h2.0v2.1h-2.0zM155.7 94.6h2.7v2.7h-2.7zM171.2 85.7h3.1v2.4h-3.1zM122.3 93.2h1.7v1.2h-1.7zM97.2 80.9h2.4v2.6h-2.4zM51.5 78.9h3.7v2.7h-3.7z"/>
<path fill="#1f5a0e" d="M15.0 74.4h2.4v1.7h-2.4zM68.1 79.4h2.3v2.9h-2.3zM58.7 74.1h3.3v2.5h-3.3zM162.0 95.9h3.0v2.9h-3.0zM161.1 74.6h2.4v2.9h-2.4zM98.1 88.6h2.1v2.1h-2.1zM84.2 74.9h3.9v4.6h-3.9zM30.0 74.3h3.5v2.9h-3.5zM88.6 81.6h3.8v3.5h-3.8zM80.6 95.5h2.7v3.1h-2.7zM110.9 86.3h3.8v4.2h-3.8zM31.7 91.5h2.3v2.1h-2.3zM144.6 92.2h3.5v3.3h-3.5zM155.5 74.3h2.2v2.2h-2.2zM139.5 71.6h3.2v3.4h-3.2zM38.3 89.2h3.2v2.5h-3.2zM38.1 91.8h3.1v2.5h-3.1z"/>
<path fill="#2f7a14" d="M80.3 79.0h2.6v2.2h-2.6zM92.0 80.5h2.8v2.2h-2.8zM4.9 88.7h1.9v1.3h-1.9zM119.5 90.2h2.1v1.7h-2.1zM160.9 72.9h3.4v3.7h-3.4zM150.5 85.2h3.2v4.2h-3.2zM6.4 78.3h3.4v3.1h-3.4zM118.0 82.6h2.7v3.0h-2.7zM22.9 88.4h3.0v2.5h-3.0zM144.4 80.6h2.0v2.2h-2.0zM80.6 79.4h1.9v1.4h-1.9zM84.0 90.4h2.3v2.1h-2.3zM28.1 81.5h3.9v3.0h-3.9zM146.3 82.5h2.0v1.9h-2.0zM167.1 93.6h3.7v4.7h-3.7zM68.2 73.0h2.0v2.4h-2.0zM122.0 75.9h2.6v2.7h-2.6zM126.5 93.6h2.9v3.5h-2.9zM137.7 73.5h2.8v2.8h-2.8z"/>
<path fill="#6cdc2c" d="M116.6 72.4h3.6v4.1h-3.6zM11.3 78.1h2.1v1.6h-2.1zM154.3 70.7h3.3v3.2h-3.3zM6.9 74.2h2.0v1.8h-2.0zM162.8 81.0h3.8v4.3h-3.8zM94.3 89.8h1.9v2.1h-1.9zM19.0 78.0h3.9v3.1h-3.9zM168.6 84.7h1.8v1.8h-1.8zM112.3 72.0h3.4v2.4h-3.4zM17.6 88.7h2.3v2.4h-2.3zM144.1 76.6h1.6v1.3h-1.6zM97.6 82.2h2.9v2.9h-2.9zM95.4 94.5h2.4v2.0h-2.4zM107.8 95.0h2.8v2.7h-2.8z"/>
<path fill="#66dc28" d="M98.2 95.5h2.1v2.0h-2.1zM164.8 87.4h1.9v1.5h-1.9zM97.2 91.0h3.9v5.0h-3.9zM14.0 95.9h3.0v2.9h-3.0zM93.8 85.8h3.1v2.7h-3.1zM26.0 92.7h3.9v3.3h-3.9zM62.4 95.8h2.9v2.7h-2.9zM83.4 87.1h3.2v2.8h-3.2zM67.8 92.4h2.8v3.4h-2.8zM53.4 91.3h2.2v2.0h-2.2zM154.6 84.5h3.0v2.3h-3.0zM127.3 85.3h1.8v1.4h-1.8z"/>
<path fill="#80e838" d="M32.2 92.4h1.7v1.4h-1.7zM110.6 94.0h3.2v4.0h-3.2zM48.8 88.2h3.1v2.8h-3.1zM159.9 90.8h2.3v1.8h-2.3zM13.4 95.8h2.8v3.3h-2.8zM27.9 92.8h2.1v2.1h-2.1zM151.5 90.7h4.0v4.2h-4.0zM39.5 93.1h3.5v3.3h-3.5zM105.5 80.7h2.0v1.8h-2.0zM63.7 87.5h4.3v3.8h-4.3zM118.7 84.4h2.3v2.3h-2.3zM148.2 83.9h4.1v4.7h-4.1zM159.8 89.4h2.4v2.2h-2.4zM151.8 90.2h4.3v3.5h-4.3zM88.8 89.8h3.9v3.1h-3.9zM109.3 92.4h4.5v4.2h-4.5z"/>
<path fill="#2f8014" d="M37.2 91.9h2.5v2.9h-2.5zM166.7 91.1h2.8v2.4h-2.8zM103.8 85.3h1.6v1.5h-1.6zM67.8 89.2h3.3v2.5h-3.3zM134.9 94.0h3.8v4.1h-3.8zM120.4 84.9h3.8v4.3h-3.8zM141.1 95.9h2.0v1.6h-2.0zM105.1 82.3h3.7v3.1h-3.7zM99.3 95.0h2.5v3.2h-2.5zM145.9 85.1h2.0v2.5h-2.0zM128.9 95.4h3.3v2.5h-3.3zM61.3 90.5h2.4v2.3h-2.4z"/>
<path fill="#255c14" d="M21.5 82.0h1.8v2.0h-1.8zM21.7 85.7h1.7v1.4h-1.7zM28.5 88.4h2.6v2.4h-2.6zM56.4 82.0h1.5v1.2h-1.5zM38.6 80.6h3.0v2.5h-3.0zM9.7 89.0h2.3v2.2h-2.3zM9.0 90.2h1.4v1.1h-1.4zM32.9 89.2h3.0v3.6h-3.0zM23.2 82.5h1.9v1.5h-1.9zM0.3 87.4h2.9v2.4h-2.9zM54.5 75.1h2.4v2.2h-2.4zM30.6 87.0h3.0v2.5h-3.0zM15.7 92.5h2.7v2.5h-2.7zM28.6 78.9h1.5v1.8h-1.5zM10.1 82.0h2.4v1.9h-2.4z"/>
<path fill="#3f8c20" d="M34.5 79.1h2.3v2.7h-2.3zM18.6 91.0h3.0v2.9h-3.0zM7.3 86.0h1.6v1.8h-1.6zM31.7 81.7h2.5v2.4h-2.5zM6.5 90.1h1.3v1.4h-1.3zM40.5 81.7h1.6v1.5h-1.6zM56.7 87.8h1.6v1.4h-1.6zM42.6 79.3h1.8v1.6h-1.8zM48.3 77.3h2.8v2.2h-2.8zM23.8 83.1h2.4v2.6h-2.4zM34.5 89.4h2.5v1.8h-2.5zM58.0 78.3h1.3v1.5h-1.3zM16.0 81.2h1.3v1.2h-1.3zM26.5 88.7h2.0v2.1h-2.0zM37.7 85.9h1.6v1.7h-1.6zM19.3 82.0h2.8v2.6h-2.8z"/>
<path fill="#1c4c10" d="M13.7 90.6h1.4v1.0h-1.4zM54.1 82.6h1.6v1.9h-1.6zM47.4 84.5h2.9v3.3h-2.9zM49.4 80.2h1.8v1.8h-1.8zM3.1 91.2h2.7v3.1h-2.7zM10.9 93.0h3.0v2.6h-3.0zM47.5 89.2h1.3v1.3h-1.3zM13.4 85.9h2.3v2.4h-2.3zM57.4 75.7h2.9v3.6h-2.9zM43.9 80.0h1.5v1.3h-1.5zM16.1 83.3h2.2v2.0h-2.2zM49.5 88.6h1.4v1.5h-1.4zM58.6 79.9h2.4v2.9h-2.4zM27.6 88.1h2.7v3.3h-2.7z"/>
<path fill="#4aa024" d="M82.3 74.0h1.8v1.6h-1.8zM139.7 77.2h2.7v3.2h-2.7zM132.0 78.4h3.5v3.0h-3.5zM87.3 79.1h1.6v1.3h-1.6zM167.6 74.6h3.5v4.3h-3.5zM111.7 79.7h2.1v1.8h-2.1zM79.7 79.9h3.9v4.8h-3.9zM75.4 82.1h2.9v2.1h-2.9zM87.2 75.4h3.7v3.8h-3.7zM110.3 79.3h4.0v4.8h-4.0zM81.4 75.3h2.8v2.0h-2.8zM122.9 76.0h2.7v2.6h-2.7zM102.2 77.3h3.3v3.6h-3.3zM112.5 73.2h2.0v2.6h-2.0z"/>
<path fill="#2c7018" d="M121.3 77.2h1.7v1.6h-1.7zM123.7 84.7h2.1v1.8h-2.1zM75.7 80.2h3.6v3.0h-3.6zM112.9 75.9h3.3v2.9h-3.3zM105.5 80.6h2.3v1.7h-2.3zM77.4 79.0h3.8v4.3h-3.8zM110.0 77.6h3.7v3.6h-3.7zM75.5 83.6h2.9v2.1h-2.9zM95.1 74.2h2.3v1.9h-2.3zM124.9 78.2h2.6v1.9h-2.6zM92.3 76.1h2.6v2.7h-2.6zM99.3 78.5h2.5v2.6h-2.5z"/>
<path fill="#143c0c" d="M81.9 80.9h2.4v2.4h-2.4zM106.2 78.4h2.7v3.4h-2.7zM80.3 82.0h1.5v1.3h-1.5zM138.1 78.9h3.4v4.0h-3.4z"/>
<path d="M102 89 L130 82 L172 74.5 L172 79 L140 86 L118 96 L100 96Z" fill="#7a9468"/>
<path d="M110 90 L140 83 L172 76 L172 77.5 L142 85 L118 92Z" fill="#a8b898"/>
<path d="M90.5 0 L97.5 0 L98 40 L99 70 L101 86 L88.5 86 L90.5 70 L91 40Z" fill="#0e160a"/>
<path d="M79.5 56 L85 56 L86 86 L80 86Z" fill="#121c0c"/>
<path d="M159 0 L169.5 0 L171 40 L172 60 L172 84 L166 84 L164.5 70 L162 40Z" fill="#141e0c"/>
<path d="M131 50 L135.5 50 L136.5 73 L131.5 73Z" fill="#131d0c"/>
<path d="M118 56 L120.5 56 L121 72 L118.5 72Z" fill="#17220e"/>
<path d="M146 58 L148.5 58 L149 70 L146.5 70Z" fill="#17220e"/>
<path d="M108 60 L110 60 L110.5 71 L108.5 71Z" fill="#1a2610"/>
<path d="M94 30 L110 18 L111 19.5 L95 33Z" fill="#111a0b"/>
<path d="M93 44 L78 32 L77 33.5 L92 47Z" fill="#111a0b"/>
<path d="M15.5 66 L27 66 L27 80 L15.5 80Z" fill="#f1f4f5"/>
<path d="M4.5 67.5 L15.5 67 L15.5 81.5 L3.5 82 L3.5 72Z" fill="#cfe0ee"/>
<path d="M5 69.5 L14 69 L14 74 L4.5 74.5Z" fill="#2c3c52"/>
<path d="M0 76.5 L8 76 L10.5 79 L10.5 85 L0 85Z" fill="#222e3e"/>
<path d="M0.5 77.5 L7 77 L8.5 79.5 L0.5 80Z" fill="#7f98b4"/>
<path d="M27 69.5 L44.5 69 L44.5 73 L27 73.5Z" fill="#eef1f3"/>
<path d="M28 73 L44 72.5 L44 78 L28 78.5Z" fill="#33424f"/>
<path d="M31 74.5 L40 74 L42 77 L31 77.5Z" fill="#8fa6bd"/>
<path d="M60 66 L68 65.5 L68 69 L60 69.5Z" fill="#6f8fae"/>
<path d="M69 67 L78 66.5 L78 69 L69 69.5Z" fill="#d9dfe0"/>
<path d="M82 88.5 L89 88 L90 96 L82 96Z" fill="#6a9acc"/>
<path d="M89 86 L96 85.5 L104 88 L104 96 L90 96Z" fill="#8a4420"/>
<path d="M91 86.5 L96 86 L97 89 L92 89.5Z" fill="#c8662e"/>
</g></g>
</defs>
</svg>
<!-- backgrounds -->
<div class="abs" style="left:1px;top:115.500px;width:698px;height:495px;background:#f5f6fa"></div>
<!-- sidebar -->
<div id="side" class="abs" style="left:1px;top:115.500px;width:93px;height:495px;background:linear-gradient(180deg,#5636b8 0%,#4a2db0 45%,#3a239e 100%)"></div>
<!-- media active tab -->
<div class="abs" style="left:7px;top:207px;width:88px;height:34px;background:#f5f6fa;border-radius:5px 0 0 5px"></div>
<div class="abs" style="left:88px;top:201px;width:6px;height:6px;background:radial-gradient(circle at 0 0,transparent 5.500px,#f5f6fa 6px)"></div>
<div class="abs" style="left:88px;top:241px;width:6px;height:6px;background:radial-gradient(circle at 0 100%,transparent 5.500px,#f5f6fa 6px)"></div>
<!-- logo -->
<svg class="abs" style="left:8px;top:131.900px" width="14" height="18" viewBox="0 0 14 18"><path d="M13.100 0 H4.200 Q0 0 0 4.500 V8 Q0.400 4.300 4.600 4.300 H11.800 Z" fill="#ff7a33"/><path d="M10.400 5.500 H4.600 Q0.500 5.500 0.200 9.500 L0 17.100 Q4.500 14 4.600 9.800 H9.100 Z" fill="#fb6a2c"/></svg>
<svg class="abs" style="left:20px;top:128px;overflow:visible" width="62" height="28"><text x="2.900" y="20.100" font-family="Liberation Sans, sans-serif" font-size="19.300" fill="#fff" stroke="#5435b6" stroke-width="0.250" textLength="54.200" lengthAdjust="spacing">lexClip</text></svg>
<!-- sidebar items -->
<svg class="abs" style="left:11px;top:178px" width="18" height="18" viewBox="0 0 18 18" fill="none" stroke="#d6cff1" stroke-width="1.500" stroke-linecap="round" stroke-linejoin="round"><path d="M9 1.800 L16.500 5.600 L9 9.400 L1.500 5.600 Z"/><path d="M1.500 9 L9 12.800 L16.500 9"/><path d="M1.500 12.300 L9 16.100 L16.500 12.300"/></svg>
<div class="t" style="left:36.40px;top:179.70px;font-size:10.5px;line-height:14px;font-weight:normal;color:#d6cff1;transform:scaleX(0.9110);transform-origin:0 50%;-webkit-text-stroke:0.400px #d6cff1">Templates</div>
<svg class="abs" style="left:11px;top:215px" width="18" height="18" viewBox="0 0 18 18" fill="none" stroke="#ff6f2d" stroke-width="1.500" stroke-linecap="round" stroke-linejoin="round"><path d="M1.500 4 Q1.500 2.500 3 2.500 H6.500 L8.300 4.500 H15 Q16.500 4.500 16.500 6 V14 Q16.500 15.500 15 15.500 H3 Q1.500 15.500 1.500 14 Z"/><path d="M9 8 V12 M7 10 H11" stroke-width="1.400"/></svg>
<div class="t" style="left:36.40px;top:216.70px;font-size:10.5px;line-height:14px;font-weight:normal;color:#ff6f2d;transform:scaleX(0.8738);transform-origin:0 50%;-webkit-text-stroke:0.400px #ff6f2d">Media</div>
<svg class="abs" style="left:11px;top:252px" width="18" height="18" viewBox="0 0 18 18" fill="none" stroke="#d6cff1" stroke-width="1.500" stroke-linecap="round" stroke-linejoin="round"><path d="M2.500 5 V2.800 H15.500 V5 M9 2.800 V15.500 M6.500 15.500 H11.500"/></svg>
<div class="t" style="left:36.40px;top:253.70px;font-size:10.5px;line-height:14px;font-weight:normal;color:#d6cff1;transform:scaleX(0.9135);transform-origin:0 50%;-webkit-text-stroke:0.400px #d6cff1">Text</div>
<svg class="abs" style="left:11px;top:289px" width="18" height="18" viewBox="0 0 18 18" fill="none" stroke="#d6cff1" stroke-width="1.500" stroke-linecap="round" stroke-linejoin="round"><rect x="1.500" y="3" width="15" height="12" rx="1.500"/><path d="M4.500 11.500 H10.500 M12.500 11.500 H13.500"/></svg>
<div class="t" style="left:36.40px;top:290.70px;font-size:10.5px;line-height:14px;font-weight:normal;color:#d6cff1;transform:scaleX(0.9021);transform-origin:0 50%;-webkit-text-stroke:0.400px #d6cff1">Subtitle</div>
<svg class="abs" style="left:11px;top:325.5px" width="18" height="18" viewBox="0 0 18 18" fill="none" stroke="#d6cff1" stroke-width="1.500" stroke-linecap="round" stroke-linejoin="round"><rect x="1.500" y="3" width="15" height="12" rx="1.500"/><path d="M7.500 6.800 L11 9 L7.500 11.200 Z" fill="#d6cff1" stroke-width="1"/></svg>
<div class="t" style="left:36.40px;top:327.20px;font-size:10.5px;line-height:14px;font-weight:normal;color:#d6cff1;transform:scaleX(0.8736);transform-origin:0 50%;-webkit-text-stroke:0.400px #d6cff1">Video</div>
<svg class="abs" style="left:11px;top:362px" width="18" height="18" viewBox="0 0 18 18" fill="none" stroke="#d6cff1" stroke-width="1.500" stroke-linecap="round" stroke-linejoin="round"><rect x="2.200" y="2.200" width="13.600" height="13.600" rx="1.500"/><circle cx="6" cy="6" r="1.200"/><path d="M2.500 12.500 L6.500 9 L9.500 11.500 L12.500 8.500 L15.500 11.500"/></svg>
<div class="t" style="left:36.40px;top:363.70px;font-size:10.5px;line-height:14px;font-weight:normal;color:#d6cff1;transform:scaleX(0.8851);transform-origin:0 50%;-webkit-text-stroke:0.400px #d6cff1">Photo</div>
<svg class="abs" style="left:11px;top:399px" width="18" height="18" viewBox="0 0 18 18" fill="none" stroke="#d6cff1" stroke-width="1.500" stroke-linecap="round" stroke-linejoin="round"><path d="M6.200 13.500 V4 L15 2 V12"/><circle cx="4.300" cy="13.800" r="2"/><circle cx="13" cy="12.200" r="2"/><path d="M6.200 6.500 L15 4.500"/></svg>
<div class="t" style="left:36.40px;top:400.70px;font-size:10.5px;line-height:14px;font-weight:normal;color:#d6cff1;transform:scaleX(0.8675);transform-origin:0 50%;-webkit-text-stroke:0.400px #d6cff1">Audio</div>
<svg class="abs" style="left:11px;top:435.5px" width="18" height="18" viewBox="0 0 18 18" fill="none" stroke="#d6cff1" stroke-width="1.500" stroke-linecap="round" stroke-linejoin="round"><path d="M5 2 L8 7 H2 Z"/><path d="M11.500 2.500 L15.500 6.500 M15.500 2.500 L11.500 6.500"/><circle cx="5" cy="13" r="2.600"/><rect x="11" y="10.500" width="5" height="5"/></svg>
<div class="t" style="left:36.40px;top:437.20px;font-size:10.5px;line-height:14px;font-weight:normal;color:#d6cff1;transform:scaleX(0.8817);transform-origin:0 50%;-webkit-text-stroke:0.400px #d6cff1">Elements</div>
<svg class="abs" style="left:11px;top:472px" width="18" height="18" viewBox="0 0 18 18" fill="none" stroke="#d6cff1" stroke-width="1.500" stroke-linecap="round" stroke-linejoin="round"><rect x="2" y="2" width="10" height="10" rx="1.500"/><rect x="6" y="6" width="10" height="10" rx="1.500"/></svg>
<div class="t" style="left:36.40px;top:473.70px;font-size:10.5px;line-height:14px;font-weight:normal;color:#d6cff1;transform:scaleX(0.8519);transform-origin:0 50%;-webkit-text-stroke:0.400px #d6cff1">Overlays</div>
<svg class="abs" style="left:11px;top:508.5px" width="18" height="18" viewBox="0 0 18 18" fill="none" stroke="#d6cff1" stroke-width="1.500" stroke-linecap="round" stroke-linejoin="round"><rect x="2.500" y="2.500" width="13" height="13" rx="1"/><path d="M2.500 2.500 L15.500 15.500"/><path d="M5.500 8 V15 M8.500 11 V15 M11.500 14 V15 M2.500 9 H6 M2.500 12 H9" stroke-width="1.100"/></svg>
<div class="t" style="left:36.40px;top:510.20px;font-size:10.5px;line-height:14px;font-weight:normal;color:#d6cff1;transform:scaleX(0.8693);transform-origin:0 50%;-webkit-text-stroke:0.400px #d6cff1">BKground</div>
<svg class="abs" style="left:11px;top:546px" width="18" height="18" viewBox="0 0 18 18" fill="none" stroke="#d6cff1" stroke-width="1.500" stroke-linecap="round" stroke-linejoin="round"><path d="M6.500 5 V3.500 Q6.500 2.300 7.700 2.300 H10.300 Q11.500 2.300 11.500 3.500 V5"/><rect x="1.800" y="5" width="14.400" height="10.500" rx="2"/><path d="M1.800 8.500 Q5 11 9 11 Q13 11 16.200 8.500"/><circle cx="9" cy="11" r="1.200"/></svg>
<div class="t" style="left:36.40px;top:547.70px;font-size:10.5px;line-height:14px;font-weight:normal;color:#d6cff1;transform:scaleX(0.9219);transform-origin:0 50%;-webkit-text-stroke:0.400px #d6cff1">Tools</div>
<!-- topbar -->
<div class="abs" style="left:94px;top:115.500px;width:605px;height:44.500px;background:#fff"></div>
<div class="abs" style="left:94px;top:159.500px;width:605px;height:1px;background:#e4e6ec"></div>
<div class="abs" style="left:109px;top:124px;width:49px;height:27px;border-radius:14px;background:#eeeff3"></div>
<div class="t" style="left:123.50px;top:130.50px;font-size:11.0px;line-height:14px;font-weight:normal;color:#222;transform:scaleX(1.0410);transform-origin:0 50%;;-webkit-text-stroke:0.450px #222">16:9</div>
<div class="t" style="left:180.30px;top:130.30px;font-size:11.0px;line-height:14px;font-weight:normal;color:#8a8b90;transform:scaleX(1.0108);transform-origin:0 50%;">Untitled</div>
<svg class="abs" style="left:248px;top:130px" width="16" height="16" viewBox="0 0 16 16" fill="none" stroke="#222" stroke-width="1.600" stroke-linecap="round" stroke-linejoin="round"><path d="M5 2 L1.800 5 L5 8"/><path d="M2 5 H9.500 A4.200 4.200 0 0 1 9.500 13.400 H4.500"/></svg>
<svg class="abs" style="left:277.300px;top:130px" width="16" height="16" viewBox="0 0 16 16" fill="none" stroke="#222" stroke-width="1.600" stroke-linecap="round" stroke-linejoin="round"><path d="M11 2 L14.200 5 L11 8"/><path d="M14 5 H6.500 A4.200 4.200 0 0 0 6.500 13.400 H11.500"/></svg>
<svg class="abs" style="left:313px;top:131px" width="14" height="14" viewBox="0 0 14 14" fill="none" stroke="#222" stroke-width="1.600" stroke-linecap="round" stroke-linejoin="round"><path d="M1 4.500 V1 H4.500 M1.200 1.200 L4.800 4.800 M9.500 1 H13 V4.500 M12.800 1.200 L9.200 4.800 M1 9.500 V13 H4.500 M1.200 12.800 L4.800 9.200 M13 9.500 V13 H9.500 M12.800 12.800 L9.200 9.200"/></svg>
<!-- help -->
<svg class="abs" style="left:460px;top:129px" width="18" height="18" viewBox="0 0 18 18" fill="none" stroke="#5a3fd8" stroke-width="1.200" stroke-linecap="round"><circle cx="9" cy="9" r="7.400"/><path d="M6.700 7 A2.300 2.300 0 1 1 9.800 9.200 Q9 9.700 9 10.800"/><circle cx="9" cy="13.200" r="0.600" fill="#5a3fd8"/></svg>
<div class="abs" style="left:493px;top:124px;width:51px;height:27px;border-radius:14px;background:#eeeff3"></div>
<div class="t" style="left:506.00px;top:129.50px;font-size:12.0px;line-height:16px;font-weight:normal;color:#222;transform:scaleX(0.9138);transform-origin:0 50%;">Save</div>
<div class="abs" style="left:554px;top:124px;width:76px;height:27px;border-radius:14px;background:#ff6f2d"></div>
<div class="t" style="left:566.40px;top:129.50px;font-size:12.0px;line-height:16px;font-weight:bold;color:#fff;transform:scaleX(0.9286);transform-origin:0 50%;">Export</div>
<svg class="abs" style="left:606px;top:132px" width="13" height="11" viewBox="0 0 13 11" fill="none" stroke="#fff" stroke-width="1.700" stroke-linecap="round" stroke-linejoin="round"><path d="M1 5.500 H11.500 M7.500 1.500 L11.500 5.500 L7.500 9.500"/></svg>
<div class="abs" style="left:638px;top:127px;width:1px;height:22px;background:#dcdde2"></div>
<!-- avatar -->
<svg class="abs" style="left:649px;top:124px" width="32" height="32" viewBox="0 0 32 32" fill="none" stroke="#cfcfd2" stroke-width="1"><path d="M11 2.300 Q16 1 21 2.300"/><path d="M11 29.700 Q16 31 21 29.700"/><path d="M1.800 11.500 Q1 15.500 1.800 19.500"/><path d="M30.200 11.500 Q31 15.500 30.200 19.500"/></svg>
<svg class="abs" style="left:652px;top:127px" width="14" height="12" viewBox="0 0 14 12"><path d="M0.500 0.500 H9.500 L13 4 V11.500 H0.500 Z" fill="#c9d8f5" stroke="#9a9a9a" stroke-width="1"/><path d="M9.500 0.500 V4 H13" fill="#fff" stroke="#9a9a9a" stroke-width="0.800"/><path d="M1 11 Q3 6.500 7 7.500 Q10 8 8 11 Z" fill="#3fae3a"/><path d="M9 11 L13 6.500 V11.500 Z" fill="#fff"/><ellipse cx="4.500" cy="3.500" rx="2.200" ry="1.200" fill="#fff"/></svg>
<svg class="abs" style="left:681.500px;top:136.500px" width="9" height="6" viewBox="0 0 9 6" fill="none" stroke="#222" stroke-width="1.300" stroke-linecap="round" stroke-linejoin="round"><path d="M0.800 1 L4.500 4.600 L8.200 1"/></svg>
<!-- media panel -->
<div class="abs" style="left:108px;top:175px;width:228px;height:32px;border-radius:4px;background:#fff"></div>
<div class="abs" style="left:302px;top:175px;width:1px;height:32px;background:#e2e3e8"></div>
<svg class="abs" style="left:167px;top:183px" width="14" height="15" viewBox="0 0 14 15" fill="none" stroke="#222" stroke-width="1.600" stroke-linecap="round" stroke-linejoin="round"><path d="M7 9.500 V1.500 M4 4.200 L7 1.300 L10 4.200 M1.200 10 V13.500 H12.800 V10"/></svg>
<div class="t" style="left:194.00px;top:182.80px;font-size:11.5px;line-height:15px;font-weight:normal;color:#222;transform:scaleX(0.9551);transform-origin:0 50%;-webkit-text-stroke:0.200px #222">Local Files</div>
<svg class="abs" style="left:314.300px;top:188.300px" width="9" height="6" viewBox="0 0 9 6" fill="none" stroke="#222" stroke-width="1.400" stroke-linecap="round" stroke-linejoin="round"><path d="M0.800 1 L4.500 4.600 L8.200 1"/></svg>
<div class="abs" style="left:344px;top:175px;width:32px;height:32px;border-radius:4px;background:#fff"></div>
<div class="abs" style="left:386px;top:175px;width:32px;height:32px;border-radius:4px;background:#fff"></div>
<div class="abs" style="left:428px;top:175px;width:32px;height:32px;border-radius:4px;background:#fff"></div>
<svg class="abs" style="left:352px;top:183px" width="16" height="16" viewBox="0 0 16 16" fill="none" stroke="#222" stroke-width="1.400" stroke-linecap="round" stroke-linejoin="round"><path d="M3.500 1.800 H12.500 Q14.500 1.800 14.500 3.800 V9.200 Q14.500 11.200 12.500 11.200 H10 L8 13.500 L6 11.200 H3.500 Q1.500 11.200 1.500 9.200 V3.800 Q1.500 1.800 3.500 1.800 Z"/><path d="M4.500 5.200 H11.500 M4.500 8 H9"/></svg>
<div class="abs" style="left:367.800px;top:171px;width:12.200px;height:12.200px;border-radius:50%;background:#1fb3f4"></div>
<div class="t" style="left:367.800px;top:173px;width:12.200px;text-align:center;font-size:7.800px;line-height:8px;color:#fff;font-weight:bold;letter-spacing:-0.200px">AI</div>
<svg class="abs" style="left:394px;top:182px" width="16" height="18" viewBox="0 0 16 18" fill="none" stroke="#222" stroke-width="1.500" stroke-linecap="round" stroke-linejoin="round"><rect x="5.200" y="1.500" width="5.600" height="9.500" rx="2.800"/><path d="M2.500 8.500 A5.500 5.500 0 0 0 13.500 8.500 M8 14 V16.500"/></svg>
<svg class="abs" style="left:437px;top:184px" width="14" height="14" viewBox="0 0 14 14" fill="none" stroke="#222" stroke-width="1.600" stroke-linecap="round" stroke-linejoin="round"><path d="M1 4 V2.500 Q1 1 2.500 1 H4 M10 1 H11.500 Q13 1 13 2.500 V4 M13 10 V11.500 Q13 13 11.500 13 H10 M4 13 H2.500 Q1 13 1 11.500 V10"/><circle cx="7" cy="7" r="2" fill="#222"/></svg>
<!-- tabs -->
<div class="t" style="left:115.30px;top:227.50px;font-size:11.5px;line-height:15px;font-weight:normal;color:#111;transform:scaleX(0.9311);transform-origin:0 50%;;-webkit-text-stroke:0.450px #111">All</div>
<div class="abs" style="left:108px;top:244.600px;width:26px;height:1.600px;background:#ff6f2d"></div>
<div class="t" style="left:157.00px;top:227.50px;font-size:11.5px;line-height:15px;font-weight:normal;color:#444;transform:scaleX(0.9637);transform-origin:0 50%;">Videos</div>
<div class="t" style="left:220.00px;top:227.50px;font-size:11.5px;line-height:15px;font-weight:normal;color:#444;transform:scaleX(0.9689);transform-origin:0 50%;">Photos</div>
<div class="t" style="left:284.00px;top:227.50px;font-size:11.5px;line-height:15px;font-weight:normal;color:#444;transform:scaleX(0.9755);transform-origin:0 50%;">Audio</div>
<!-- cloud off -->
<svg class="abs" style="left:438px;top:228px" width="18" height="17" viewBox="0 0 18 17" fill="none" stroke="#222" stroke-width="1.300" stroke-linecap="round" stroke-linejoin="round"><path d="M5 13.500 H12.500 A2.800 2.800 0 0 0 13 8 A4 4 0 0 0 6 6 A3.200 3.200 0 0 0 5 13.500 Z" transform="translate(-0.500 0)"/><path d="M2.500 2.500 L15 15.500"/></svg>
<svg class="abs" style="left:451px;top:226px" width="10" height="8" viewBox="0 0 10 8"><path d="M2.500 0.500 H7.500 L9.800 3 L5 7.800 L0.200 3 Z" fill="#ffa630"/></svg>
<!-- thumbnail -->
<div class="abs" style="left:111px;top:262px;width:110px;height:62px;border-radius:3px;overflow:hidden;background:#2e5a1c">
<svg width="110" height="62" viewBox="0 0 172 96" preserveAspectRatio="none"><use href="#forest"/></svg>
</div>
<div class="abs" style="left:117px;top:266px;width:31px;height:10px;border-radius:2px;background:rgba(40,40,40,0.550)"></div>
<div class="t" style="left:121.60px;top:265.30px;font-size:8.5px;line-height:11px;font-weight:bold;color:#fff;transform:scaleX(1.0299);transform-origin:0 50%;">00:05</div>
<div class="t" style="left:110.40px;top:330.50px;font-size:10.0px;line-height:13px;font-weight:normal;color:#a8a9ae;transform:scaleX(0.9596);transform-origin:0 50%;">sample-5s.mp4</div>
<!-- collapse handle -->
<div class="abs" style="left:475px;top:160px;width:224px;height:284px;background:#e4e5e9"></div>
<div class="abs" style="left:475px;top:269px;width:11px;height:67px;border-radius:0 4px 4px 0;background:#f5f6fa"></div>
<svg class="abs" style="left:477px;top:300px" width="7" height="10" viewBox="0 0 7 10" fill="none" stroke="#85868c" stroke-width="1.600" stroke-linecap="round" stroke-linejoin="round"><path d="M5.500 1.200 L1.800 5 L5.500 8.800"/></svg>
<!-- preview toolbar -->
<div class="abs" style="left:475px;top:160.500px;width:224px;height:32.500px;background:linear-gradient(90deg,#f5f6fa 0,#fbfbfd 6px)"></div>
<svg class="abs" style="left:497px;top:169.500px" width="17" height="15" viewBox="0 0 17 15" fill="none" stroke="#222" stroke-width="1.500" stroke-linecap="round" stroke-linejoin="round"><path d="M1.500 5 H4.500 L9 1.500 V13.500 L4.500 10 H1.500 Z"/><path d="M12.500 5 Q14 7.500 12.500 10"/></svg>
<div class="abs" style="left:526px;top:169px;width:1px;height:15px;background:#d9dade"></div>
<div class="t" style="left:537.40px;top:169.50px;font-size:11.0px;line-height:14px;font-weight:normal;color:#222;transform:scaleX(0.9346);transform-origin:0 50%;">100%</div>
<svg class="abs" style="left:566px;top:174px" width="9" height="7" viewBox="0 0 9 7" fill="none" stroke="#222" stroke-width="1.400" stroke-linecap="round" stroke-linejoin="round"><path d="M1 1.200 L4.500 5 L8 1.200"/></svg>
<div class="abs" style="left:585.500px;top:169px;width:1px;height:15px;background:#d9dade"></div>
<svg class="abs" style="left:595px;top:175px" width="13" height="4" viewBox="0 0 13 4" fill="#222"><circle cx="1.700" cy="2" r="1.500"/><circle cx="6.500" cy="2" r="1.500"/><circle cx="11.300" cy="2" r="1.500"/></svg>
<svg class="abs" style="left:667px;top:169px" width="15" height="16" viewBox="0 0 15 16" fill="none" stroke="#222" stroke-width="1.600" stroke-linecap="round" stroke-linejoin="round"><path d="M1.500 3.800 H13.500 M5 3.500 V1.500 H10 V3.500 M3 4 V13 Q3 14.500 4.500 14.500 H10.500 Q12 14.500 12 13 V4"/></svg>
<!-- video -->
<div class="abs" style="left:503px;top:254px;width:172px;height:96px;overflow:hidden;background:#2e5a1c">
<svg width="172" height="96" viewBox="0 0 172 96"><use href="#forest"/></svg>
</div>
<svg class="abs" style="left:551px;top:265px" width="11" height="11" viewBox="0 0 11 11" fill="none" stroke="rgba(255,255,255,0.750)" stroke-width="1.100"><circle cx="5.500" cy="5.500" r="4.500"/><path d="M3.500 3.500 H6 Q7.500 3.500 7.500 5 Q7.500 6.200 6 6.200 H4.500 V8"/></svg>
<div class="t" style="left:565.00px;top:264.00px;font-size:11.0px;line-height:14px;font-weight:bold;color:rgba(255,255,255,0.900);transform:scaleX(0.9618);transform-origin:0 50%;text-shadow:0 0 2px rgba(0,0,0,0.300)">Remove Watermark</div>
<!-- scene controls -->
<div class="abs" style="left:503px;top:360px;width:87px;height:26px;border-radius:13px;border:1px solid #bcbdc2;background:#e9eaed"></div>
<svg class="abs" style="left:518px;top:367px" width="10" height="12" viewBox="0 0 10 12"><path d="M1 1 L9 6 L1 11 Z" fill="#222"/></svg>
<div class="t" style="left:532.00px;top:365.80px;font-size:11.0px;line-height:14px;font-weight:normal;color:#222;transform:scaleX(0.9358);transform-origin:0 50%;;-webkit-text-stroke:0.450px #222">Scene 01</div>
<div class="abs" style="left:598px;top:366px;width:1px;height:13px;background:#c4c5ca"></div>
<svg class="abs" style="left:613px;top:367px" width="13" height="12" viewBox="0 0 13 12" fill="#9a9b9f"><rect x="0.500" y="0.500" width="2" height="11"/><path d="M12.500 0.500 V11.500 L3 6 Z"/></svg>
<svg class="abs" style="left:651px;top:366px" width="14" height="15" viewBox="0 0 14 15"><path d="M0.500 0.500 L13.500 7.500 L0.500 14.500 Z" fill="#111"/></svg>
<svg class="abs" style="left:685px;top:367px" width="13" height="12" viewBox="0 0 13 12" fill="#9a9b9f"><rect x="10.500" y="0.500" width="2" height="11"/><path d="M0.500 0.500 V11.500 L10 6 Z"/></svg>
<!-- timeline bar -->
<div class="abs" style="left:94px;top:444px;width:605px;height:166px;background:#fff"></div>
<div class="abs" style="left:94px;top:441px;width:605px;height:3px;background:linear-gradient(180deg,rgba(0,0,0,0),rgba(0,0,0,0.040))"></div>
<div class="abs" style="left:94px;top:475.500px;width:605px;height:1px;background:#f1f1f4"></div>
<div class="abs" style="left:106px;top:449px;width:78px;height:21px;border-radius:4px;background:#ffeee5"></div>
<svg class="abs" style="left:115px;top:453px" width="13" height="14" viewBox="0 0 13 14" fill="none" stroke="#ff6f2d" stroke-width="1.200" stroke-linecap="round" stroke-linejoin="round"><path d="M6.500 1 V13"/><rect x="3.500" y="2.800" width="8" height="2.800" rx="0.800"/><rect x="1.500" y="8" width="8" height="2.800" rx="0.800"/></svg>
<div class="t" style="left:133.90px;top:450.30px;font-size:12.0px;line-height:16px;font-weight:normal;color:#ff6f2d;transform:scaleX(0.9420);transform-origin:0 50%;-webkit-text-stroke:0.300px #ff6f2d">Timeline</div>
<svg class="abs" style="left:196px;top:454px" width="13" height="13" viewBox="0 0 13 13" fill="none" stroke="#222" stroke-width="1.200" stroke-linecap="round" stroke-linejoin="round"><rect x="0.800" y="0.800" width="11.400" height="11.400" rx="1.500"/><path d="M6.500 3.800 V9.200 M3.800 6.500 H9.200"/></svg>
<svg class="abs" style="left:226px;top:453px" width="13" height="15" viewBox="0 0 13 15" fill="none" stroke="#c4c5ca" stroke-width="1.200" stroke-linecap="round" stroke-linejoin="round"><path d="M6.500 1 V14"/><path d="M4 3 H2.500 Q1 3 1 4.500 V10.500 Q1 12 2.500 12 H4 M9 3 H10.500 Q12 3 12 4.500 V10.500 Q12 12 10.500 12 H9"/></svg>
<div class="t" style="left:256.00px;top:450.50px;font-size:11.5px;line-height:15px;font-weight:normal;color:#222;transform:scaleX(0.9751);transform-origin:0 50%;">Trim</div>
<svg class="abs" style="left:295px;top:453px" width="14" height="14" viewBox="0 0 14 14" fill="none" stroke="#222" stroke-width="1.200" stroke-linecap="round" stroke-linejoin="round"><rect x="0.800" y="4" width="9" height="9" rx="1.500"/><path d="M4 4 V2.300 Q4 0.800 5.500 0.800 H11.700 Q13.200 0.800 13.200 2.300 V8.500 Q13.200 10 11.700 10 H10"/></svg>
<svg class="abs" style="left:325px;top:453px" width="13" height="15" viewBox="0 0 13 15" fill="none" stroke="#222" stroke-width="1.200" stroke-linecap="round" stroke-linejoin="round"><path d="M1 3.500 H12 M4.300 3.300 V1.300 H8.700 V3.300 M2.500 3.800 V12.200 Q2.500 13.700 4 13.700 H9 Q10.500 13.700 10.500 12.200 V3.800"/></svg>
<div class="t" style="left:359.00px;top:452.00px;font-size:10.5px;line-height:14px;font-weight:normal;color:#222;transform:scaleX(0.9958);transform-origin:0 50%;">00:05.7 / 00:05.7</div>
<svg class="abs" style="left:526px;top:452px" width="16" height="16" viewBox="0 0 16 16" fill="none" stroke="#222" stroke-width="1.100" stroke-linecap="round"><circle cx="8" cy="8" r="6.800"/><path d="M5.300 8 H10.700" stroke-width="1.600"/></svg>
<div class="abs" style="left:556px;top:459.500px;width:78px;height:1px;background:#dcdde1"></div>
<div class="abs" style="left:552.500px;top:457px;width:6px;height:6px;border-radius:50%;background:#111"></div>
<svg class="abs" style="left:645px;top:452px" width="16" height="16" viewBox="0 0 16 16" fill="none" stroke="#222" stroke-width="1.100" stroke-linecap="round"><circle cx="8" cy="8" r="6.800"/><path d="M5.500 8 H10.500 M8 5.500 V10.500" stroke-width="1.600"/></svg>
<svg class="abs" style="left:675px;top:452px" width="16" height="16" viewBox="0 0 16 16" fill="none" stroke="#222" stroke-width="1.100" stroke-linecap="round" stroke-linejoin="round"><rect x="0.800" y="1.200" width="14.400" height="13.600"/><path d="M3.500 8 H12.500 M5.500 6 L3.500 8 L5.500 10 M10.500 6 L12.500 8 L10.500 10"/></svg>
<!-- timeline tracks -->
<div class="abs" style="left:99px;top:512.500px;width:115px;height:51px;border-radius:7px;background:#b7b8bc"></div>
<div class="abs" style="left:101px;top:514.500px;width:111px;height:47px;border-radius:5px;background:#fff"></div>
<div class="abs" style="left:101.500px;top:515.500px;width:110px;height:45px;border-radius:5px;overflow:hidden;background:#2e5a1c">
<svg class="abs" style="left:0;top:0" width="83" height="45" viewBox="0 0 172 96" preserveAspectRatio="none"><use href="#forest"/></svg>
<svg class="abs" style="left:83px;top:0" width="83" height="45" viewBox="0 0 172 96" preserveAspectRatio="none"><use href="#forest"/></svg>
</div>
<div class="t" style="left:107.00px;top:520.30px;font-size:9.0px;line-height:12px;font-weight:bold;color:#fff;transform:scaleX(1.0983);transform-origin:0 50%;text-shadow:0 0 2px rgba(0,0,0,0.500)">01</div>
<div class="abs" style="left:217px;top:512px;width:69px;height:54.700px;border:3px solid #fc0000;border-radius:1.500px;background:#eeeff4"></div>
<svg class="abs" style="left:245.100px;top:533.900px" width="11" height="11" viewBox="0 0 11 11" fill="none" stroke="#222" stroke-width="1.400"><path d="M5.500 0 V11 M0 5.500 H11"/></svg>
<div class="abs" style="left:100px;top:569px;width:236px;height:26px;border-radius:4px;border:1px dashed #5fdcae;background:#e7fbf4"></div>
<svg class="abs" style="left:184.500px;top:575.500px" width="13" height="14" viewBox="0 0 13 14" fill="none" stroke="#222" stroke-width="1.300" stroke-linecap="round" stroke-linejoin="round"><path d="M3.600 10.800 V1.800 H10.800 V9.800"/><circle cx="2.400" cy="11" r="1.100" fill="#222"/><circle cx="9.600" cy="10" r="1.100" fill="#222"/></svg>
<div class="t" style="left:205.30px;top:574.30px;font-size:10.5px;line-height:14px;font-weight:normal;color:#222;transform:scaleX(0.9960);transform-origin:0 50%;;-webkit-text-stroke:0.450px #222">Add Audio</div>
<div class="abs" style="left:214px;top:476px;width:1px;height:134px;background:rgba(120,121,128,0.550)"></div>
<!-- playhead -->
<div class="abs" style="left:97.900px;top:478px;width:1.200px;height:132px;background:#222"></div>
<svg class="abs" style="left:94px;top:476.200px" width="9" height="10" viewBox="0 0 9 10"><path d="M0 0 H9 V5.400 L4.500 8.900 L0 5.400 Z" fill="#1c1c1c"/></svg>
<!-- scrollbar -->
<div class="abs" style="left:693px;top:477px;width:6px;height:133px;border-radius:3px 3px 0 0;background:#c8c9cd"></div>
<!--APPEND-->
  </div>
  <div class="abs" style="left:0;top:0;width:700px;height:1px;background:#000"></div>
  <div class="abs" style="left:0;top:0;width:1px;height:611px;background:#000"></div>
  <div class="abs" style="left:699px;top:0;width:1px;height:611px;background:#000"></div>
  <div class="abs" style="left:0;top:609.500px;width:700px;height:1.500px;background:#000"></div>
</div>
</body>
</html>
